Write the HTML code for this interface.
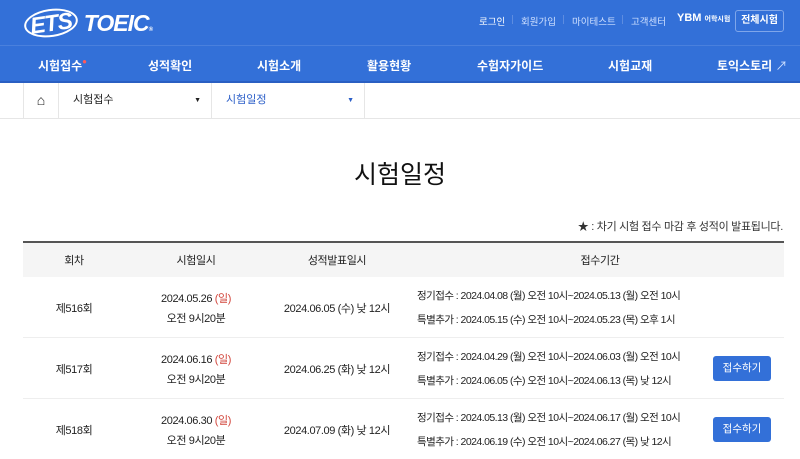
<!DOCTYPE html>
<html><head><meta charset="utf-8"><style>
*{margin:0;padding:0;box-sizing:border-box}
body{width:800px;height:459px;overflow:hidden;background:#fff;font-family:"Liberation Sans","Noto Sans CJK KR",sans-serif;color:#222;position:relative}
.hdr{position:absolute;left:0;top:0;width:800px;height:83px;background:#3370d8}
.hdr .line{position:absolute;left:0;top:45px;width:800px;height:1px;background:#4a80dd}
.hdr .bot{position:absolute;left:0;top:81px;width:800px;height:2px;background:#2a5fc2}
.logo{position:absolute;left:24px;top:9px;color:#fff;font-weight:bold;font-style:italic;font-size:23px;letter-spacing:-1px}
.logo .ets{display:inline-block;border:2.5px solid #fff;border-radius:50%/50%;padding:0 4px;margin-right:6px;transform:rotate(-8deg);line-height:24px}
.top{position:absolute;top:14px;font-size:9.5px;color:#cfe0ff}
.sp{position:absolute;top:15px;width:1px;height:9px;background:#5d8ce0}
.btnall{position:absolute;left:735px;top:10px;width:49px;height:22px;border:1px solid #7fa6ea;border-radius:3px;color:#fff;font-size:10px;text-align:center;line-height:20px;font-weight:bold}
.nav{position:absolute;top:57px;color:#fff;font-size:12px;font-weight:bold}
.bc{position:absolute;top:83px;left:0;width:800px;height:36px;border-bottom:1px solid #e6e6e6}
.bc div{position:absolute;top:0;height:35px;border-left:1px solid #e6e6e6;font-size:11px;line-height:35px}
h1{position:absolute;top:155px;width:800px;text-align:center;font-size:25px;font-weight:normal;color:#111}
.note{position:absolute;right:17px;top:218px;font-size:11px;color:#333;letter-spacing:-0.3px}
.th{position:absolute;left:23px;top:241px;width:761px;height:36px;background:#f5f5f5;border-top:2px solid #555}
.c{position:absolute;font-size:11px;text-align:center;transform:translateX(-50%);white-space:nowrap;letter-spacing:-0.4px}
.l{position:absolute;font-size:10.5px;white-space:nowrap;left:417px;letter-spacing:-0.55px}
.r{color:#d2463c}
.sep{position:absolute;left:23px;width:761px;height:1px;background:#eee}
.btn{position:absolute;left:713px;width:58px;height:25px;background:#3370d8;border-radius:3px;color:#fff;font-size:10.5px;text-align:center;line-height:25px}
</style></head><body>
<div class="hdr"><div class="line"></div><div class="bot"></div>
<div class="logo"><span class="ets">ETS</span>TOEIC<span style="font-size:6px">®</span></div>
<span class="top" style="left:479px;color:#fff">로그인</span>
<div class="sp" style="left:512px"></div>
<span class="top" style="left:521px">회원가입</span>
<div class="sp" style="left:563px"></div>
<span class="top" style="left:572px">마이테스트</span>
<div class="sp" style="left:622px"></div>
<span class="top" style="left:631px">고객센터</span>
<span class="top" style="left:677px;color:#fff;font-weight:bold;font-size:11px;top:12px">YBM <span style="font-size:7px">어학시험</span></span>
<div class="btnall">전체시험</div>
<span class="nav" style="left:38px">시험접수<span style="color:#ff5a5a;font-size:8px;vertical-align:top">●</span></span>
<span class="nav" style="left:148px">성적확인</span>
<span class="nav" style="left:257px">시험소개</span>
<span class="nav" style="left:367px">활용현황</span>
<span class="nav" style="left:477px">수험자가이드</span>
<span class="nav" style="left:608px">시험교재</span>
<span class="nav" style="left:717px">토익스토리 <span style="font-weight:normal;color:#cfe0ff">↗</span></span>
</div>
<div class="bc">
<div style="left:23px;width:35px;text-align:center;font-size:14px">⌂</div>
<div style="left:58px;width:153px;padding-left:14px">시험접수<span style="position:absolute;right:10px;font-size:7px">▼</span></div>
<div style="left:211px;width:154px;padding-left:14px;color:#2c5fc8;border-right:1px solid #e6e6e6">시험일정<span style="position:absolute;right:10px;font-size:7px">▼</span></div>
</div>
<h1>시험일정</h1>
<div class="note">★ : 차기 시험 접수 마감 후 성적이 발표됩니다.</div>
<div class="th"></div>
<span class="c" style="left:74px;top:252px">회차</span>
<span class="c" style="left:196px;top:252px">시험일시</span>
<span class="c" style="left:337px;top:252px">성적발표일시</span>
<span class="c" style="left:600px;top:252px">접수기간</span>

<span class="c" style="left:74px;top:300px">제516회</span>
<span class="c" style="left:196px;top:290px">2024.05.26 <span class="r">(일)</span></span>
<span class="c" style="left:196px;top:310px">오전 9시20분</span>
<span class="c" style="left:337px;top:300px">2024.06.05 (수) 낮 12시</span>
<span class="l" style="top:288px">정기접수 : 2024.04.08 (월) 오전 10시~2024.05.13 (월) 오전 10시</span>
<span class="l" style="top:312px">특별추가 : 2024.05.15 (수) 오전 10시~2024.05.23 (목) 오후 1시</span>
<div class="sep" style="top:337px"></div>

<span class="c" style="left:74px;top:361px">제517회</span>
<span class="c" style="left:196px;top:351px">2024.06.16 <span class="r">(일)</span></span>
<span class="c" style="left:196px;top:371px">오전 9시20분</span>
<span class="c" style="left:337px;top:361px">2024.06.25 (화) 낮 12시</span>
<span class="l" style="top:349px">정기접수 : 2024.04.29 (월) 오전 10시~2024.06.03 (월) 오전 10시</span>
<span class="l" style="top:373px">특별추가 : 2024.06.05 (수) 오전 10시~2024.06.13 (목) 낮 12시</span>
<div class="btn" style="top:356px">접수하기</div>
<div class="sep" style="top:398px"></div>

<span class="c" style="left:74px;top:422px">제518회</span>
<span class="c" style="left:196px;top:412px">2024.06.30 <span class="r">(일)</span></span>
<span class="c" style="left:196px;top:432px">오전 9시20분</span>
<span class="c" style="left:337px;top:422px">2024.07.09 (화) 낮 12시</span>
<span class="l" style="top:410px">정기접수 : 2024.05.13 (월) 오전 10시~2024.06.17 (월) 오전 10시</span>
<span class="l" style="top:434px">특별추가 : 2024.06.19 (수) 오전 10시~2024.06.27 (목) 낮 12시</span>
<div class="btn" style="top:417px">접수하기</div>
</body></html>
